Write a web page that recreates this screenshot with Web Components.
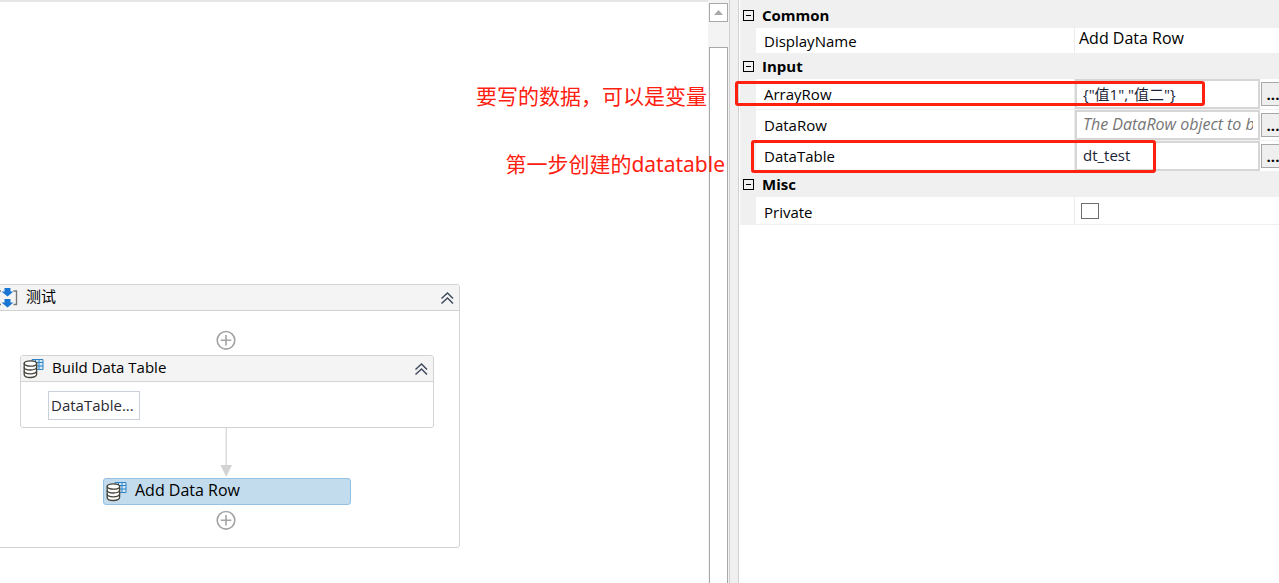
<!DOCTYPE html>
<html lang="zh-CN">
<head>
<meta charset="utf-8">
<title>Add Data Row</title>
<style>
  html, body { height: 100%; }
  body {
    margin: 0;
    overflow: hidden;
    background: #fff;
    color: #000;
    font: 15px/20px "Open Sans", "Noto Sans CJK SC", sans-serif;
  }
</style>
</head>
<body>
<studio-shell>
  <workflow-canvas slot="canvas">
    <activity-card heading="测试" icon="sequence" class="root">
      <add-point></add-point>
      <activity-card heading="Build Data Table" icon="database" class="build">
        <dialog-button>DataTable...</dialog-button>
      </activity-card>
      <flow-arrow></flow-arrow>
      <activity-card heading="Add Data Row" icon="database" class="leaf" selected></activity-card>
      <add-point></add-point>
    </activity-card>
    <canvas-note slot="notes" class="data">要写的数据，可以是变量</canvas-note>
    <canvas-note slot="notes" class="table">第一步创建的datatable</canvas-note>
  </workflow-canvas>

  <property-group slot="props" heading="Common">
    <property-row name="DisplayName" type="text" value="Add Data Row"></property-row>
  </property-group>
  <property-group slot="props" heading="Input">
    <property-row name="ArrayRow" type="expression" value='{"值1","值二"}' mark="wide"></property-row>
    <property-row name="DataRow" type="expression" hint="The DataRow object to be added"></property-row>
    <property-row name="DataTable" type="expression" value="dt_test" mark="short"></property-row>
  </property-group>
  <property-group slot="props" heading="Misc">
    <property-row name="Private" type="check"></property-row>
  </property-group>
</studio-shell>

<script>
const ICONS = {
  sequence: `
    <svg width="22" height="22" viewBox="0 0 22 22">
      <path d="M5 4H2.500V17.500H5M17.500 4H20.500V17.500H17.500" fill="none" stroke="#777" stroke-width="1.400"/>
      <path d="M8.500 1h6v3.500h3L11.500 9.500 5.500 4.500h3zM8.500 12h6v3.500h3l-6 5-6-5h3z" fill="#1976d2"/>
    </svg>`,
  database: `
    <svg width="22" height="22" viewBox="0.500 1 22 22">
      <path d="M9.500 2.500h11v10h-11zM9.500 5.500h11M9.500 9h11M13 2.500v10M16.500 2.500v10" fill="#d5e9f7" stroke="#2d83c5"/>
      <path d="M1.700 6.500v11c0 1.700 2.800 3 6.200 3s6.200-1.300 6.200-3v-11z" fill="#fff" stroke="#45443a" stroke-width="1.300"/>
      <ellipse cx="7.900" cy="6.500" rx="6.200" ry="2.700" fill="#fff" stroke="#45443a" stroke-width="1.300"/>
      <path d="M1.700 10.200c0 1.700 2.800 2.800 6.200 2.800s6.200-1.100 6.200-2.800M1.700 14c0 1.700 2.800 2.800 6.200 2.800s6.200-1.100 6.200-2.800" fill="none" stroke="#45443a" stroke-width="1.300"/>
    </svg>`,
  collapse: `
    <svg width="14" height="14" viewBox="0 0 14 14">
      <path d="M1.500 7.500L7.500 2l5.500 5.500M1.500 12.500L7.500 7l5.500 5.500" fill="none" stroke="#404b60" stroke-width="1.500"/>
    </svg>`
};

class StudioShell extends HTMLElement {
  constructor() {
    super();
    this.attachShadow({ mode: "open" });
    this.shadowRoot.innerHTML = `
      <style>
        :host {
          display: grid;
          grid-template-columns: minmax(0, 1fr) 21px 11px 539px;
          height: 100vh;
        }
        .scroll {
          display: flex;
          flex-direction: column;
          gap: 25px;
          box-sizing: border-box;
          padding: 3px 1px 0;
          background: #f3f3f3;
        }
        .scroll button {
          display: grid;
          place-items: center;
          box-sizing: border-box;
          height: 19px;
          padding: 0;
          background: #fff;
          border: 1px solid #a8a8a8;
        }
        .thumb {
          flex: 1;
          background: #fff;
          border: 1px solid #a8a8a8;
          border-bottom: 0;
        }
        .split {
          background: #f0f0f0;
          border: solid #d0d0d0;
          border-width: 0 1px;
          margin-right: 1px;
        }
        .panel {
          padding-top: 2px;
          background: linear-gradient(#f0f0f0 2px, #fff 2px);
          min-width: 0;
        }
      </style>
      <slot name="canvas"></slot>
      <div class="scroll">
        <button type="button" aria-label="Scroll up">
          <svg width="9" height="5" viewBox="0 0 9 5"><path d="M0 5L4.500 0 9 5z" fill="#a8a8a8"/></svg>
        </button>
        <div class="thumb"></div>
      </div>
      <div class="split"></div>
      <div class="panel"><slot name="props"></slot></div>
    `;
  }
}

class WorkflowCanvas extends HTMLElement {
  constructor() {
    super();
    this.attachShadow({ mode: "open" });
    this.shadowRoot.innerHTML = `
      <style>
        :host {
          display: block;
          position: relative;
          z-index: 1;
          box-sizing: border-box;
          padding-top: 282px;
          border-top: 2px solid #e6e6e6;
        }
        ::slotted(.root) { width: 466px; margin-left: -6px; }
        /* notes float over the canvas and the scroll bar */
        ::slotted(canvas-note) { position: absolute; }
        ::slotted(.data) { top: 80px; right: 1px; }
        ::slotted(.table) { top: 148px; right: -17px; }
      </style>
      <slot></slot>
      <slot name="notes"></slot>
    `;
  }
}

class ActivityCard extends HTMLElement {
  constructor() {
    super();
    this.attachShadow({ mode: "open" });
    const leaf = this.hasAttribute("selected");
    this.shadowRoot.innerHTML = `
      <style>
        :host {
          display: block;
          box-sizing: border-box;
          overflow: hidden;
          background: #fff;
          border: 1px solid #d3d3d3;
          border-radius: 3px;
        }
        :host([selected]) { background: #c2dbed; border-color: #94c1e3; }
        header {
          display: flex;
          align-items: center;
          gap: 7px;
          height: 25px;
          padding: 0 5px 0 2px;
        }
        header.bar { background: #f4f4f4; border-bottom: 1px solid #d3d3d3; }
        h2 { flex: 1; margin: 0; font-size: 15px; font-weight: 400; line-height: 20px; padding-bottom: 4px; }
        :host([selected]) h2 { font-size: 16px; }
        svg { display: block; }
        button { padding: 0; border: 0; background: none; }
        .body { display: flex; flex-direction: column; }
        :host(.root) .body { align-items: center; padding: 19px 0 17px; }
        :host(.root) header { gap: 8px; padding-left: 1px; }
        :host(.build) .body { align-items: flex-start; padding: 9px 27px 7px; }
        ::slotted(.build) { width: 414px; margin-top: 5px; }
        ::slotted(.leaf) { width: 248px; margin-bottom: 5px; }
      </style>
      <header class="${leaf ? "" : "bar"}">
        ${ICONS[this.getAttribute("icon")]}
        <h2>${this.getAttribute("heading")}</h2>
        ${leaf ? "" : `<button type="button" aria-label="Collapse">${ICONS.collapse}</button>`}
      </header>
      ${leaf ? "" : `<div class="body"><slot></slot></div>`}
    `;
  }
}

class AddPoint extends HTMLElement {
  constructor() {
    super();
    this.attachShadow({ mode: "open" });
    this.shadowRoot.innerHTML = `
      <style>
        :host { display: block; height: 20px; }
        button { display: block; padding: 0; border: 0; background: none; }
        svg { display: block; }
      </style>
      <button type="button" aria-label="Add activity">
        <svg width="22" height="20" viewBox="0 0 22 20" fill="none" stroke="#a3a3a3" stroke-width="1.600">
          <circle cx="10" cy="10.300" r="8.800"/>
          <path d="M10 5v10.600M4.700 10.300h10.600"/>
        </svg>
      </button>
    `;
  }
}

class FlowArrow extends HTMLElement {
  constructor() {
    super();
    this.attachShadow({ mode: "open" });
    this.shadowRoot.innerHTML = `
      <style>
        :host { display: block; height: 50px; }
        svg { display: block; }
      </style>
      <svg width="14" height="50" viewBox="0 0 14 50">
        <path d="M5.500 0h1.500v37h-1.500z" fill="#dcdcdc"/>
        <path d="M.500 37h11.500L6.200 49z" fill="#d3d3d3"/>
      </svg>
    `;
  }
}

class DialogButton extends HTMLElement {
  constructor() {
    super();
    this.attachShadow({ mode: "open" });
    this.shadowRoot.innerHTML = `
      <style>
        :host { display: block; }
        button {
          display: block;
          box-sizing: border-box;
          width: 92px;
          height: 29px;
          padding: 0 2px 2px;
          font: inherit;
          text-align: left;
          color: #2b2b33;
          background: #fff;
          border: 1px solid #c9d0dc;
        }
      </style>
      <button type="button"><slot></slot></button>
    `;
  }
}

class CanvasNote extends HTMLElement {
  constructor() {
    super();
    this.attachShadow({ mode: "open" });
    this.shadowRoot.innerHTML = `
      <style>
        :host {
          display: block;
          color: #ff2010;
          font: 400 21px/28px "Noto Sans", "Noto Sans CJK SC", sans-serif;
          white-space: nowrap;
        }
      </style>
      <slot></slot>
    `;
  }
}

class PropertyGroup extends HTMLElement {
  constructor() {
    super();
    this.attachShadow({ mode: "open" });
    this.shadowRoot.innerHTML = `
      <style>
        :host { display: block; }
        header {
          display: flex;
          align-items: center;
          gap: 8px;
          height: 26px;
          padding-left: 3px;
          background: #f0f0f0;
        }
        button {
          display: grid;
          place-items: center;
          box-sizing: border-box;
          width: 11px;
          height: 11px;
          padding: 0;
          background: #f0f0f0;
          border: 1px solid #000;
        }
        button::before { content: ""; width: 5px; height: 1px; background: #000; }
        h3 { margin: 0; font-size: 15px; font-weight: 700; line-height: 20px; }
      </style>
      <header>
        <button type="button" aria-label="Collapse group"></button>
        <h3>${this.getAttribute("heading")}</h3>
      </header>
      <slot></slot>
    `;
  }
}

class PropertyRow extends HTMLElement {
  constructor() {
    super();
    this.attachShadow({ mode: "open" });
    this.render();
  }

  render() {
    const type = this.getAttribute("type");
    const mark = this.getAttribute("mark");
    let editor = `<input type="checkbox" id="value">`;
    if (type === "text") {
      editor = `<input type="text" id="value" class="plain">`;
    } else if (type === "expression") {
      editor = `<input type="text" id="value" class="box"><button type="button" aria-label="Edit expression">...</button>`;
    }
    this.shadowRoot.innerHTML = `
      <style>
        :host {
          display: grid;
          position: relative;
          grid-template-columns: minmax(0, 319fr) minmax(0, 204fr);
          box-sizing: border-box;
          height: 31px;
          border-left: 16px solid #f0f0f0;
          background: #fff;
        }
        :host([type="text"]) { height: 25px; }
        :host([type="check"]) { height: 28px; }
        label {
          display: flex;
          align-items: center;
          padding-left: 8px;
          border-right: 1px solid #ececec;
        }
        .value { display: flex; align-items: center; overflow: hidden; }
        :host([type="expression"]) label,
        :host([type="expression"]) .value { border-bottom: 1px solid #f0f0f0; }
        :host([type="check"]) label,
        :host([type="check"]) .value { border-bottom: 1px solid #f0f0f0; }
        :host([type="check"]) label { padding-top: 2px; }
        /* the last expression row meets the next group header */
        :host([type="expression"]:last-child) { height: 30px; }
        :host([type="expression"]:last-child) label,
        :host([type="expression"]:last-child) .value { border-bottom: 0; }
        input { box-sizing: border-box; margin: 0; font: inherit; color: #000; }
        .plain { width: 100%; height: 20px; padding: 0 4px; border: 0; align-self: flex-start; font-size: 16px; }
        .box {
          flex: 1;
          min-width: 0;
          height: 30px;
          padding: 0 5px 2px 6px;
          color: #1c2438;
          background: #fff;
          border: 2px solid #d6d6d6;
        }
        .box:placeholder-shown { font-size: 16px; }
        .box::placeholder { color: #757575; font-style: italic; opacity: 1; }
        input[type="checkbox"] {
          appearance: none;
          width: 18px;
          height: 16px;
          margin-left: 6px;
          background: #fff;
          border: 1px solid #6e6e6e;
        }
        button {
          flex: none;
          box-sizing: border-box;
          width: 24px;
          height: 24px;
          margin: 0 -6px 0 1px;
          padding: 0;
          font: 700 15px/20px "Open Sans", sans-serif;
          color: #000;
          background: #efefef;
          border: 1px solid #a8a8a8;
        }
        .mark {
          position: absolute;
          z-index: 2;
          box-sizing: border-box;
          border: 3px solid #ff2010;
          border-radius: 3px;
          pointer-events: none;
        }
        .wide { top: 2px; left: -21px; width: 470px; height: 25px; }
        .short { top: -1px; left: -5px; width: 405px; height: 33px; }
      </style>
      <label for="value">${this.getAttribute("name")}</label>
      <div class="value">${editor}</div>
      ${mark ? `<div class="mark ${mark}"></div>` : ""}
    `;
    const input = this.shadowRoot.querySelector("input");
    if (type !== "check") {
      input.value = this.getAttribute("value") || "";
      input.placeholder = this.getAttribute("hint") || " ";
    }
  }
}

customElements.define("studio-shell", StudioShell);
customElements.define("workflow-canvas", WorkflowCanvas);
customElements.define("activity-card", ActivityCard);
customElements.define("add-point", AddPoint);
customElements.define("flow-arrow", FlowArrow);
customElements.define("dialog-button", DialogButton);
customElements.define("canvas-note", CanvasNote);
customElements.define("property-group", PropertyGroup);
customElements.define("property-row", PropertyRow);
</script>
</body>
</html>
